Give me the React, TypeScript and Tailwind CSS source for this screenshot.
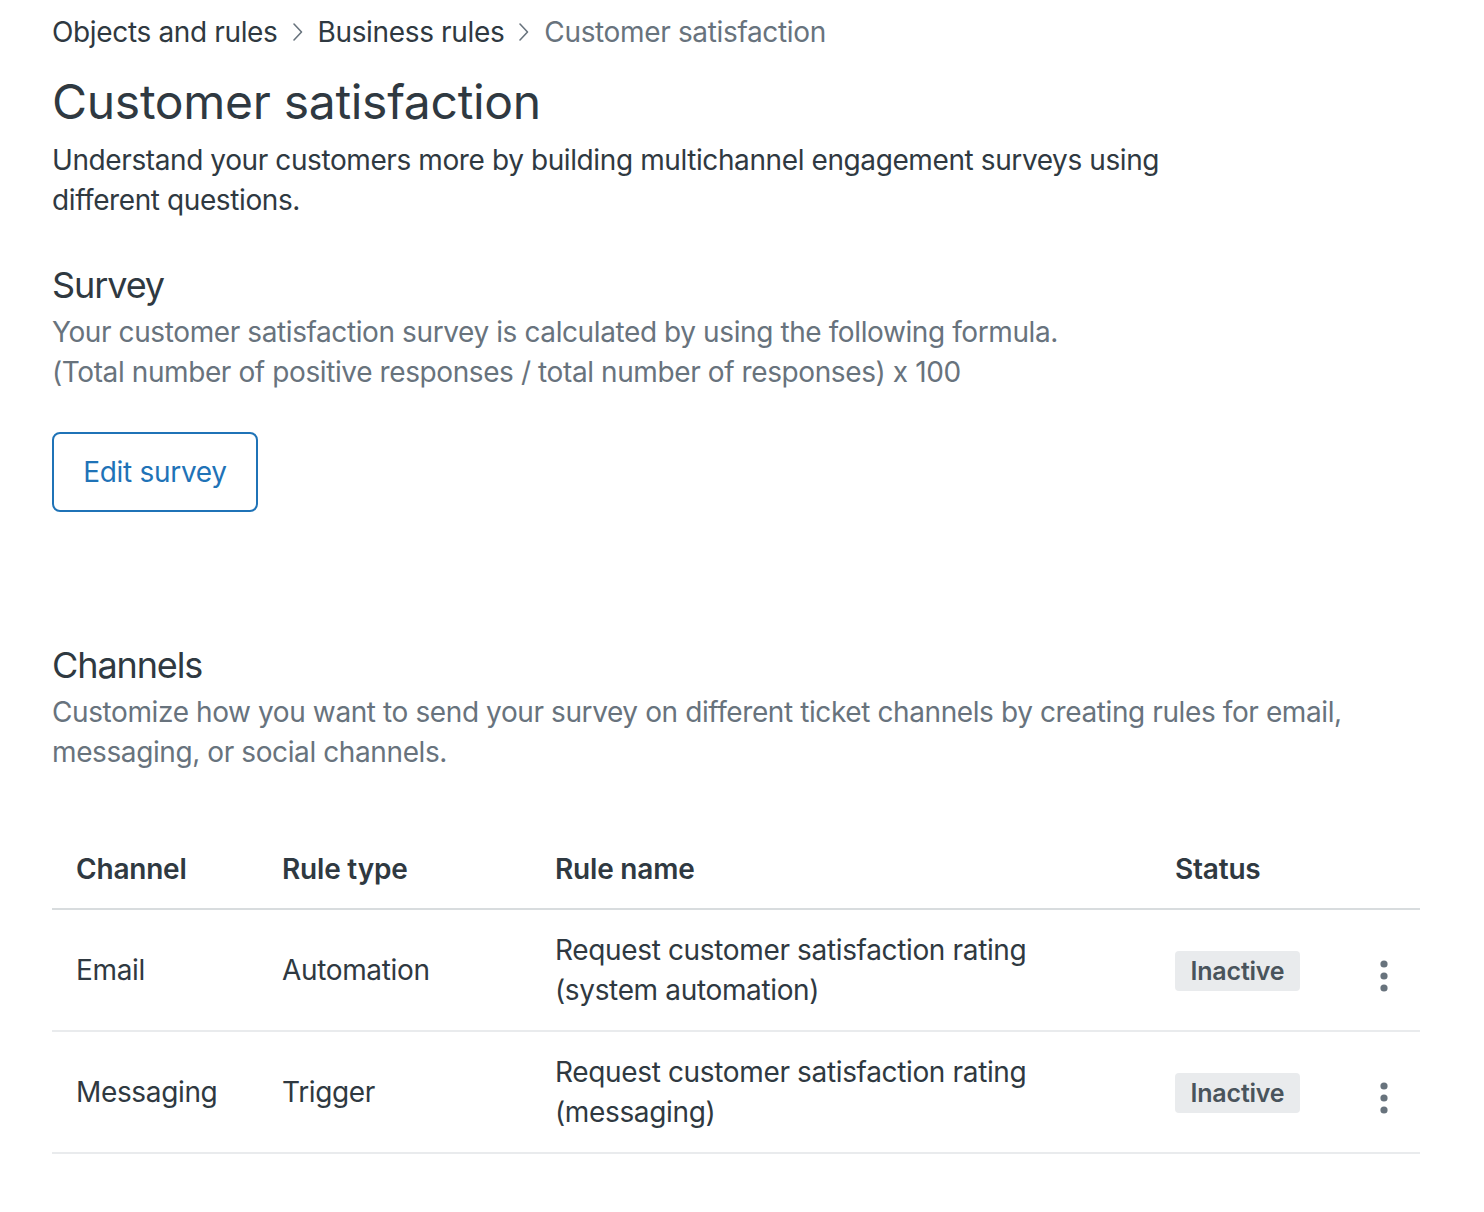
import { Fragment } from "react";

const crumbs = ["Objects and rules", "Business rules"];

const rules = [
  {
    channel: "Email",
    type: "Automation",
    name: ["Request customer satisfaction rating", "(system automation)"],
  },
  {
    channel: "Messaging",
    type: "Trigger",
    name: ["Request customer satisfaction rating", "(messaging)"],
  },
];

const Chevron = () => (
  <svg width="12" height="20" viewBox="0 0 12 20" fill="none" className="shrink-0">
    <path d="M2 2l7.5 8L2 18" stroke="#68737d" strokeWidth="1.6" strokeLinecap="round" strokeLinejoin="round" />
  </svg>
);

const MoreIcon = () => (
  <svg width="10" height="34" viewBox="0 0 10 34" fill="#68737d">
    <circle cx="5" cy="5" r="3.6" />
    <circle cx="5" cy="17" r="3.6" />
    <circle cx="5" cy="29" r="3.6" />
  </svg>
);

export default function App() {
  return (
    <div className="min-h-screen bg-white font-['Inter','Noto_Sans',sans-serif] text-[#2f3941]">
      <div className="px-[52px] pt-3 w-[1420px] box-content">
        {/* breadcrumb */}
        <nav className="flex items-center gap-[14px] text-[28px] leading-[40px] tracking-[-0.35px]">
          {crumbs.map((c) => (
            <Fragment key={c}>
              <span>{c}</span>
              <Chevron />
            </Fragment>
          ))}
          <span className="text-[#68737d]">Customer satisfaction</span>
        </nav>

        <h1 className="mt-[18px] text-[48px] leading-[64px] tracking-[-0.3px]">Customer satisfaction</h1>
        <p className="mt-[6px] max-w-[1200px] text-[28px] leading-[40px] tracking-[-0.4px]">
          Understand your customers more by building multichannel engagement surveys using different questions.
        </p>

        {/* survey */}
        <h2 className="mt-[43px] text-[36px] leading-[44px] tracking-[-1.1px]">Survey</h2>
        <p className="mt-[5px] text-[28px] leading-[40px] tracking-[-0.4px] text-[#68737d]">
          Your customer satisfaction survey is calculated by using the following formula.
          <br />
          (Total number of positive responses / total number of responses) x 100
        </p>
        <button className="mt-10 h-20 w-[206px] rounded-lg border-2 border-[#1f73b7] text-[28px] tracking-[-0.3px] text-[#1f73b7]">
          Edit survey
        </button>

        {/* channels */}
        <h2 className="mt-[131px] text-[36px] leading-[44px] tracking-[-1.1px]">Channels</h2>
        <p className="mt-[5px] text-[28px] leading-[40px] tracking-[-0.4px] text-[#68737d]">
          Customize how you want to send your survey on different ticket channels by creating rules for email, messaging, or social channels.
        </p>

        <table className="mt-[57px] w-[1368px] table-fixed border-collapse text-left text-[28px] leading-[40px] tracking-[-0.35px]">
          <colgroup>
            <col className="w-[206px]" />
            <col className="w-[273px]" />
            <col className="w-[620px]" />
            <col className="w-[197px]" />
            <col className="w-[72px]" />
          </colgroup>
          <thead>
            <tr className="h-20 border-b-2 border-[#d8dcde]">
              <th className="pl-6 font-semibold tracking-[-0.2px]">Channel</th>
              <th className="pl-6 font-semibold tracking-[-0.2px]">Rule type</th>
              <th className="pl-6 font-semibold tracking-[-0.2px]">Rule name</th>
              <th className="pl-6 font-semibold tracking-[-0.2px]">Status</th>
              <th />
            </tr>
          </thead>
          <tbody>
            {rules.map((r) => (
              <tr key={r.channel} className="h-[122px] border-b-2 border-[#e9ebed]">
                <td className="pl-6">{r.channel}</td>
                <td className="pl-6">{r.type}</td>
                <td className="pl-6 py-5">
                  {r.name[0]}
                  <br />
                  {r.name[1]}
                </td>
                <td className="pl-6">
                  <span className="inline-flex h-10 w-[125px] items-center justify-center rounded-[4px] bg-[#e9ebed] text-[25px] font-semibold tracking-[-0.2px] text-[#49545c]">
                    Inactive
                  </span>
                </td>
                <td>
                  <div className="flex justify-center pt-3">
                    <MoreIcon />
                  </div>
                </td>
              </tr>
            ))}
          </tbody>
        </table>
      </div>
    </div>
  );
}
